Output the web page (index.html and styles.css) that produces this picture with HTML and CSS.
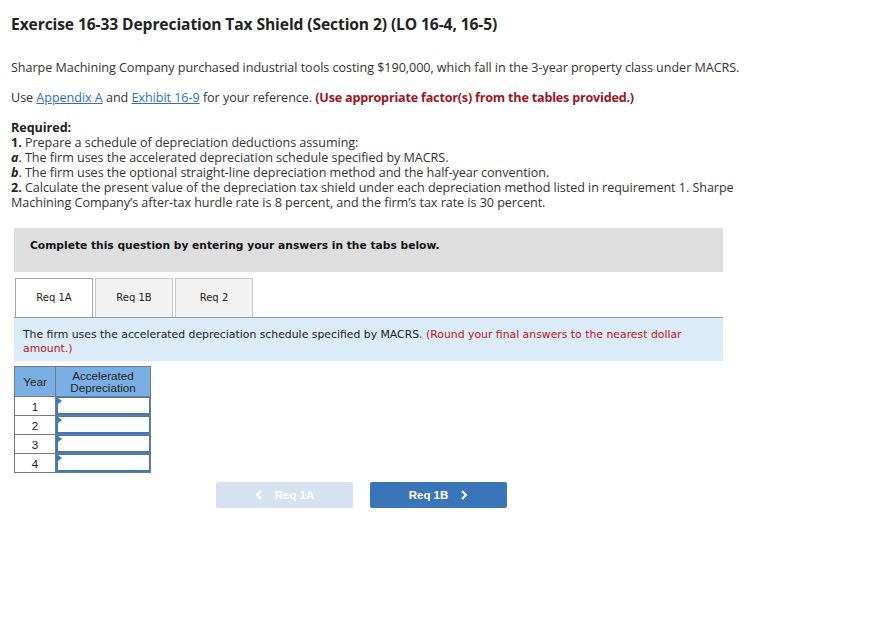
FILE: index.html
```html
<!DOCTYPE html>
<html>
<head>
<meta charset="utf-8">
<link rel="stylesheet" href="styles.css">
</head>
<body>
<div class="page">
  <h1 class="title">Exercise 16-33 Depreciation Tax Shield (Section 2) (LO 16-4, 16-5)</h1>
  <p class="intro">Sharpe Machining Company purchased industrial tools costing $190,000, which fall in the 3-year property class under MACRS.</p>
  <p class="intro use">Use <a href="#" class="link">Appendix A</a> and <a href="#" class="link">Exhibit 16-9</a> for your reference. <b class="warn">(Use appropriate factor(s) from the tables provided.)</b></p>
  <div class="required">
    <div><b>Required:</b></div>
    <div><b>1.</b> Prepare a schedule of depreciation deductions assuming:</div>
    <div><b><i>a</i></b>. The firm uses the accelerated depreciation schedule specified by MACRS.</div>
    <div><b><i>b</i></b>. The firm uses the optional straight-line depreciation method and the half-year convention.</div>
    <div><b>2.</b> Calculate the present value of the depreciation tax shield under each depreciation method listed in requirement 1. Sharpe Machining Company’s after-tax hurdle rate is 8 percent, and the firm’s tax rate is 30 percent.</div>
  </div>

  <div class="question">
    <div class="banner">Complete this question by entering your answers in the tabs below.</div>
    <div class="tabs">
      <div class="tab active">Req 1A</div>
      <div class="tab">Req 1B</div>
      <div class="tab">Req 2</div>
    </div>
    <div class="panel">The firm uses the accelerated depreciation schedule specified by MACRS. <span class="round">(Round your final answers to the nearest dollar amount.)</span></div>

    <table class="grid">
      <colgroup><col class="c1"><col class="c2"></colgroup>
      <tr>
        <th>Year</th>
        <th>Accelerated Depreciation</th>
      </tr>
      <tr><td>1</td><td class="inp"><div class="box"></div></td></tr>
      <tr><td>2</td><td class="inp"><div class="box"></div></td></tr>
      <tr><td>3</td><td class="inp"><div class="box"></div></td></tr>
      <tr><td>4</td><td class="inp"><div class="box"></div></td></tr>
    </table>

    <div class="nav">
      <button class="btn prev"><svg class="chev" width="8" height="10" viewBox="0 0 8 10"><path d="M6 1 L2 5 L6 9" fill="none" stroke="#fff" stroke-width="2"/></svg>Req 1A</button>
      <button class="btn next">Req 1B<svg class="chev" width="8" height="10" viewBox="0 0 8 10"><path d="M2 1 L6 5 L2 9" fill="none" stroke="#fff" stroke-width="2"/></svg></button>
    </div>
  </div>
</div>
</body>
</html>
```

FILE: styles.css
```css
html, body {
  margin: 0;
  padding: 0;
  background: #fff;
}

.page {
  padding: 14px 0 0 11px;
  width: 740px;
  font-family: "Open Sans", "Lato", sans-serif;
  color: #333;
}

.title {
  margin: 0;
  font-size: 15.6px;
  line-height: 20px;
  font-weight: 700;
  color: #222;
  letter-spacing: -0.1px;
}

.intro {
  margin: 26px 0 0 0;
  font-size: 12.6px;
  line-height: 15px;
  letter-spacing: -0.05px;
}

.intro.use {
  margin-top: 15px;
}

.link {
  color: #2f6fc0;
  text-decoration: underline;
}

.warn {
  color: #a0141e;
  letter-spacing: -0.2px;
}

.required {
  margin-top: 15px;
  font-size: 12.6px;
  line-height: 15px;
  letter-spacing: -0.05px;
  width: 730px;
}

.required b {
  color: #222;
}

.question {
  margin: 18px 0 0 3px;
  width: 709px;
  font-family: "DejaVu Sans", Verdana, sans-serif;
}

.banner {
  background: #dedede;
  padding: 11px 16px 19px 16px;
  font-size: 10.7px;
  line-height: 14px;
  font-weight: 700;
  color: #111;
}

.tabs {
  display: flex;
  gap: 2px;
  margin-top: 6px;
  padding-left: 1px;
}

.tab {
  width: 76px;
  height: 38px;
  border: 1px solid #c8c8c8;
  border-bottom: none;
  background: #f2f2f2;
  font-size: 10px;
  line-height: 38px;
  text-align: center;
  color: #222;
}

.tab.active {
  background: #fff;
  border-color: #a8a8a8;
}

.panel {
  border-top: 1px solid #999;
  background: #dbebf8;
  padding: 10px 30px 5px 9px;
  font-size: 10.85px;
  line-height: 14px;
  color: #222;
}

.round {
  color: #c0141e;
}

.grid {
  margin-top: 5px;
  border-collapse: collapse;
  table-layout: fixed;
  width: 136px;
  font-family: "Liberation Sans", Arial, sans-serif;
  font-size: 11.7px;
  color: #222;
}

.grid .c1 {
  width: 41px;
}

.grid .c2 {
  width: 95px;
}

.grid th {
  background: #7aafe5;
  border: 1px solid #7a7a7a;
  font-weight: 400;
  height: 29px;
  line-height: 12px;
  padding: 0;
}

.grid td {
  border: 1px solid #7a7a7a;
  height: 18px;
  padding: 0;
  text-align: center;
}

.box {
  height: 15px;
  border-style: solid;
  border-color: #3f78bd;
  border-width: 1px 1px 2px 2px;
  background: #fff;
  position: relative;
}

.box::before {
  content: "";
  position: absolute;
  left: 0;
  top: 0;
  width: 0;
  height: 0;
  border-top: 3px solid transparent;
  border-bottom: 3px solid transparent;
  border-left: 4px solid #3f78bd;
}

.nav {
  display: flex;
  gap: 17px;
  margin-top: 9px;
  padding-left: 202px;
}

.btn {
  width: 137px;
  height: 26px;
  border: none;
  border-radius: 2px;
  font-family: "Liberation Sans", Arial, sans-serif;
  font-size: 11.5px;
  font-weight: 700;
  color: #fff;
  display: flex;
  align-items: center;
  justify-content: center;
  gap: 12px;
  padding: 0;
}

.btn.prev {
  background: #d6e2f0;
}

.btn.next {
  background: #3a75b9;
}
```
